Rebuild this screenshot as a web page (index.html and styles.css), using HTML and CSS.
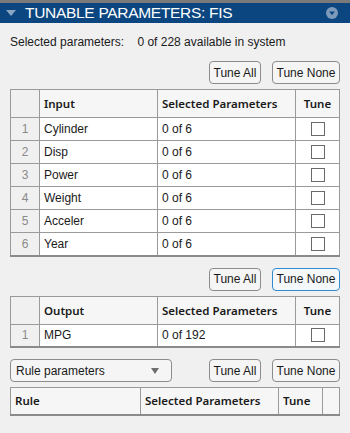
FILE: index.html
```html
<!DOCTYPE html>
<html lang="en">
<head>
    <meta charset="UTF-8">
    <title>Tunable Parameters: FIS</title>
    <link rel="stylesheet" href="styles.css">
</head>
<body>
    <div class="panel">
        <!-- Collapsible section header -->
        <div class="section-header">
            <span class="collapse-arrow"></span>
            <span class="section-title">TUNABLE PARAMETERS: FIS</span>
            <svg class="header-menu" width="12" height="12" viewBox="0 0 12 12">
                <circle cx="6" cy="6" r="6" fill="#7d9aba"/>
                <path d="M3.2 4.6 L8.8 4.6 L6 8.2 Z" fill="#0b4680"/>
            </svg>
        </div>

        <div class="section-body">
            <p class="summary">
                <span class="summary-label">Selected parameters:</span>
                <span>0 of 228 available in system</span>
            </p>

            <!-- Inputs -->
            <div class="toolbar">
                <button class="btn btn-all">Tune All</button>
                <button class="btn btn-none">Tune None</button>
            </div>
            <table class="param-table">
                <thead>
                    <tr>
                        <th class="col-index"></th>
                        <th class="col-name">Input</th>
                        <th class="col-selected">Selected Parameters</th>
                        <th class="col-tune">Tune</th>
                    </tr>
                </thead>
                <tbody>
                    <tr><td class="col-index">1</td><td>Cylinder</td><td>0 of 6</td><td class="col-tune"><span class="check"></span></td></tr>
                    <tr><td class="col-index">2</td><td>Disp</td><td>0 of 6</td><td class="col-tune"><span class="check"></span></td></tr>
                    <tr><td class="col-index">3</td><td>Power</td><td>0 of 6</td><td class="col-tune"><span class="check"></span></td></tr>
                    <tr><td class="col-index">4</td><td>Weight</td><td>0 of 6</td><td class="col-tune"><span class="check"></span></td></tr>
                    <tr><td class="col-index">5</td><td>Acceler</td><td>0 of 6</td><td class="col-tune"><span class="check"></span></td></tr>
                    <tr><td class="col-index">6</td><td>Year</td><td>0 of 6</td><td class="col-tune"><span class="check"></span></td></tr>
                </tbody>
            </table>

            <!-- Outputs -->
            <div class="toolbar">
                <button class="btn btn-all">Tune All</button>
                <button class="btn btn-none focused">Tune None</button>
            </div>
            <table class="param-table">
                <thead>
                    <tr>
                        <th class="col-index"></th>
                        <th class="col-name">Output</th>
                        <th class="col-selected">Selected Parameters</th>
                        <th class="col-tune">Tune</th>
                    </tr>
                </thead>
                <tbody>
                    <tr><td class="col-index">1</td><td>MPG</td><td>0 of 192</td><td class="col-tune"><span class="check"></span></td></tr>
                </tbody>
            </table>

            <!-- Rules -->
            <div class="toolbar toolbar-rules">
                <div class="dropdown">
                    <span>Rule parameters</span>
                    <span class="dropdown-arrow"></span>
                </div>
                <button class="btn btn-all">Tune All</button>
                <button class="btn btn-none">Tune None</button>
            </div>
            <table class="param-table rule-table">
                <thead>
                    <tr>
                        <th class="col-rule">Rule</th>
                        <th class="col-rule-selected">Selected Parameters</th>
                        <th class="col-rule-tune">Tune</th>
                        <th class="col-spacer"></th>
                    </tr>
                </thead>
            </table>
        </div>
    </div>
</body>
</html>
```

FILE: styles.css
```css
* {
    margin: 0;
    padding: 0;
    box-sizing: border-box;
}

body {
    background-color: #f0f0f0;
    font-family: 'Liberation Sans', Arial, sans-serif;
    font-size: 12px;
    color: #1a1a1a;
}

.panel {
    width: 350px;
    height: 433px;
    overflow: hidden;
}

/* Section header */
.section-header {
    display: flex;
    align-items: center;
    height: 23px;
    border-top: 3px solid #7a7a7a;
    background-color: #0b4680;
    color: white;
    padding: 0 12px 0 6px;
}

.collapse-arrow {
    width: 0;
    height: 0;
    border-left: 5px solid transparent;
    border-right: 5px solid transparent;
    border-top: 6px solid #8aa4c2;
    margin-right: 9px;
}

.section-title {
    flex: 1;
    font-size: 15.5px;
    letter-spacing: -0.3px;
}

.section-body {
    padding: 0 10px;
}

.summary {
    margin-top: 11px;
    line-height: 16px;
}

.summary-label {
    margin-right: 10px;
}

/* Button rows */
.toolbar {
    display: flex;
    justify-content: flex-end;
    gap: 11px;
    margin-top: 11px;
    margin-bottom: 5px;
}

.btn {
    height: 23px;
    padding: 0;
    white-space: nowrap;
    font-family: inherit;
    font-size: 12px;
    color: #1a1a1a;
    background-color: #f5f5f5;
    border: 1px solid #8c8c8c;
    border-radius: 4px;
}

.btn-all {
    width: 52px;
}

.btn-none {
    width: 68px;
}

.btn.focused {
    border-color: #2f8ad0;
    background-color: #f4f8fb;
}

.toolbar-rules {
    margin-top: 11px;
}

.dropdown {
    display: flex;
    align-items: center;
    justify-content: space-between;
    width: 162px;
    height: 23px;
    margin-right: auto;
    padding: 0 12px 0 5px;
    background-color: #f5f5f5;
    border: 1px solid #8c8c8c;
    border-radius: 4px;
}

.dropdown-arrow {
    width: 0;
    height: 0;
    border-left: 4px solid transparent;
    border-right: 4px solid transparent;
    border-top: 6px solid #6e6e6e;
}

/* Tables */
.param-table {
    width: 330px;
    border-collapse: collapse;
    table-layout: fixed;
    background-color: white;
    border-bottom: 2px solid #8a8a8a;
}

.param-table th,
.param-table td {
    border: 1px solid #9a9a9a;
    text-align: left;
    padding: 0 4px;
    white-space: nowrap;
    overflow: hidden;
}

.param-table th {
    height: 28px;
    background-color: #f6f6f6;
    font-family: 'Noto Sans', 'Open Sans', sans-serif;
    font-weight: 600;
    font-size: 11.5px;
    color: #1a1a1a;
}

.param-table td {
    height: 23px;
}

.param-table .col-index {
    width: 29px;
    background-color: #f0f0f0;
    color: #8a8a8a;
    text-align: center;
}

.col-name {
    width: 118px;
}

.col-selected {
    width: 138px;
}

.param-table .col-tune {
    text-align: center;
}

.check {
    display: inline-block;
    width: 14px;
    height: 14px;
    margin-top: 3px;
    border: 1px solid #6a6a6a;
    background-color: white;
}

.rule-table th {
    height: 27px;
}

.col-rule {
    width: 130px;
}

.col-rule-selected {
    width: 138px;
}

.col-rule-tune {
    width: 44px;
}
```
